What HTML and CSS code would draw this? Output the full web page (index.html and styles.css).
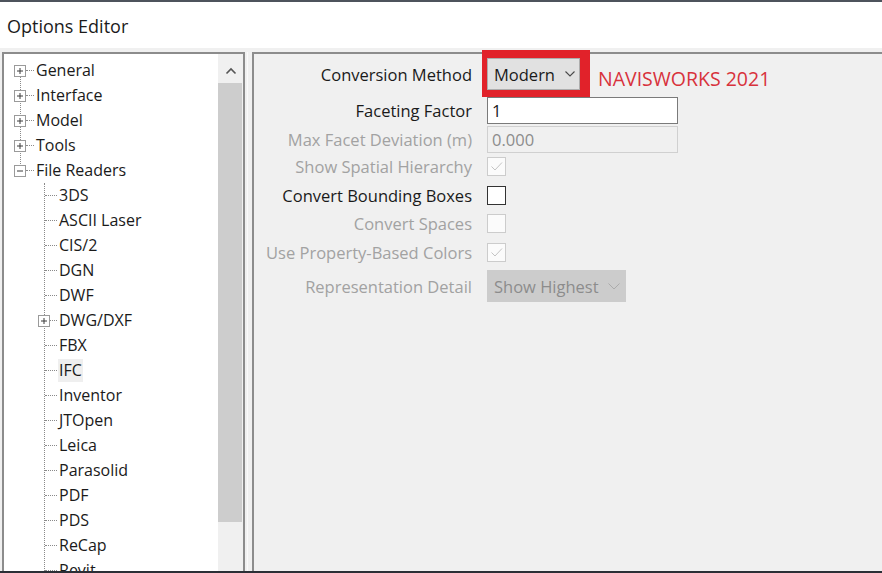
FILE: index.html
```html
<!DOCTYPE html>
<html>
<head>
<meta charset="utf-8">
<title>Options Editor</title>
<link rel="stylesheet" href="styles.css">
</head>
<body>
<div class="window">
  <div class="topline"></div>
  <div class="titlebar"><span class="title">Options Editor</span></div>
  <div class="content">
    <div class="tree-panel">
      <div class="tree">
        <ul class="top">
          <li class="node"><svg class="tog" viewBox="0 0 12 12"><rect x="0.5" y="0.5" width="11" height="11" fill="#fff" stroke="#9a9a9a"/><path d="M3 6h6M6 3v6" stroke="#3a3a3a" stroke-width="1"/></svg><span class="stub"></span><span class="lbl">General</span></li>
          <li class="node"><svg class="tog" viewBox="0 0 12 12"><rect x="0.5" y="0.5" width="11" height="11" fill="#fff" stroke="#9a9a9a"/><path d="M3 6h6M6 3v6" stroke="#3a3a3a" stroke-width="1"/></svg><span class="stub"></span><span class="lbl">Interface</span></li>
          <li class="node"><svg class="tog" viewBox="0 0 12 12"><rect x="0.5" y="0.5" width="11" height="11" fill="#fff" stroke="#9a9a9a"/><path d="M3 6h6M6 3v6" stroke="#3a3a3a" stroke-width="1"/></svg><span class="stub"></span><span class="lbl">Model</span></li>
          <li class="node"><svg class="tog" viewBox="0 0 12 12"><rect x="0.5" y="0.5" width="11" height="11" fill="#fff" stroke="#9a9a9a"/><path d="M3 6h6M6 3v6" stroke="#3a3a3a" stroke-width="1"/></svg><span class="stub"></span><span class="lbl">Tools</span></li>
          <li class="node"><svg class="tog" viewBox="0 0 12 12"><rect x="0.5" y="0.5" width="11" height="11" fill="#fff" stroke="#9a9a9a"/><path d="M3 6h6" stroke="#3a3a3a" stroke-width="1"/></svg><span class="stub"></span><span class="lbl">File Readers</span></li>
        </ul>
        <ul class="kids">
          <li class="leaf"><span class="kstub"></span><span class="lbl">3DS</span></li>
          <li class="leaf"><span class="kstub"></span><span class="lbl">ASCII Laser</span></li>
          <li class="leaf"><span class="kstub"></span><span class="lbl">CIS/2</span></li>
          <li class="leaf"><span class="kstub"></span><span class="lbl">DGN</span></li>
          <li class="leaf"><span class="kstub"></span><span class="lbl">DWF</span></li>
          <li class="leaf"><svg class="tog ktog" viewBox="0 0 12 12"><rect x="0.5" y="0.5" width="11" height="11" fill="#fff" stroke="#9a9a9a"/><path d="M3 6h6M6 3v6" stroke="#3a3a3a" stroke-width="1"/></svg><span class="kstub short"></span><span class="lbl">DWG/DXF</span></li>
          <li class="leaf"><span class="kstub"></span><span class="lbl">FBX</span></li>
          <li class="leaf"><span class="kstub"></span><span class="lbl sel">IFC</span></li>
          <li class="leaf"><span class="kstub"></span><span class="lbl">Inventor</span></li>
          <li class="leaf"><span class="kstub"></span><span class="lbl">JTOpen</span></li>
          <li class="leaf"><span class="kstub"></span><span class="lbl">Leica</span></li>
          <li class="leaf"><span class="kstub"></span><span class="lbl">Parasolid</span></li>
          <li class="leaf"><span class="kstub"></span><span class="lbl">PDF</span></li>
          <li class="leaf"><span class="kstub"></span><span class="lbl">PDS</span></li>
          <li class="leaf"><span class="kstub"></span><span class="lbl">ReCap</span></li>
          <li class="leaf"><span class="kstub"></span><span class="lbl">Revit</span></li>
        </ul>
      </div>
      <div class="vscroll">
        <div class="sarrow"><svg width="12" height="8" viewBox="0 0 12 8"><path d="M1.5 6.5L6 2l4.5 4.5" fill="none" stroke="#555" stroke-width="1.6"/></svg></div>
        <div class="thumb"></div>
      </div>
    </div>
    <div class="splitter"><span class="splitline"></span></div>
    <div class="form-panel">
      <div class="form">
        <div class="label">Conversion Method</div>
        <div class="ctrl">
          <div class="combo highlight"><span>Modern</span><svg class="chev" width="10" height="6" viewBox="0 0 10 6"><path d="M0.5 0.5L5 5l4.5-4.5" fill="none" stroke="#4a4a4a" stroke-width="1.1"/></svg></div>
          <span class="note">NAVISWORKS 2021</span>
        </div>

        <div class="label">Faceting Factor</div>
        <div class="ctrl"><div class="field">1</div></div>

        <div class="label off">Max Facet Deviation (m)</div>
        <div class="ctrl"><div class="field disabled">0.000</div></div>

        <div class="label off">Show Spatial Hierarchy</div>
        <div class="ctrl"><span class="check disabled"><svg width="17" height="17" viewBox="0 0 17 17"><path d="M3.5 8.5l3.5 3.5 7-7.5" fill="none" stroke="#c4c4c4" stroke-width="1"/></svg></span></div>

        <div class="label">Convert Bounding Boxes</div>
        <div class="ctrl"><span class="check"></span></div>

        <div class="label off">Convert Spaces</div>
        <div class="ctrl"><span class="check disabled"></span></div>

        <div class="label off">Use Property-Based Colors</div>
        <div class="ctrl"><span class="check disabled"><svg width="17" height="17" viewBox="0 0 17 17"><path d="M3.5 8.5l3.5 3.5 7-7.5" fill="none" stroke="#c4c4c4" stroke-width="1"/></svg></span></div>

        <div class="label off">Representation Detail</div>
        <div class="ctrl"><div class="combo combo-off"><span>Show Highest</span><svg class="chev" width="12" height="7" viewBox="0 0 12 7"><path d="M0.5 0.5L6 6l5.5-5.5" fill="none" stroke="#ababab" stroke-width="1"/></svg></div></div>
      </div>
    </div>
  </div>
  <div class="bottombar"></div>
</div>
</body>
</html>
```

FILE: styles.css
```css
* { box-sizing: border-box; }
html, body { margin: 0; padding: 0; }
body {
  background: #f0f0f0;
  font-family: "Open Sans", "Noto Sans", "Liberation Sans", sans-serif;
  color: #1a1a1a;
  overflow: hidden;
}
.window {
  width: 882px;
  height: 573px;
  display: flex;
  flex-direction: column;
  overflow: hidden;
}
.topline { height: 2px; background: #4d535c; flex: none; }
.titlebar {
  height: 46px;
  flex: none;
  background: #ffffff;
  display: flex;
  align-items: center;
  padding-left: 7px;
}
.title { font-size: 18px; color: #1b1b1b; position: relative; top: 1px; }
.content {
  flex: 1;
  display: flex;
  padding-top: 4px;
  padding-left: 2px;
  min-height: 0;
}
.bottombar { height: 2px; background: #2b2f36; flex: none; }

/* tree panel */
.tree-panel {
  width: 243px;
  flex: none;
  background: #ffffff;
  border: 2px solid #8c8c8c;
  border-bottom: none;
  display: flex;
  overflow: hidden;
}
.tree {
  flex: 1;
  padding-top: 4px;
  padding-left: 10px;
  font-size: 16px;
  color: #1a1a1a;
}
.tree ul { list-style: none; margin: 0; padding: 0; }
.tree .top { position: relative; }
.tree .top::before {
  content: "";
  position: absolute;
  left: 6px;
  top: 12px;
  bottom: 13px;
  border-left: 1px dotted #8a8a8a;
}
.node, .leaf {
  height: 25px;
  display: flex;
  align-items: center;
  white-space: nowrap;
}
.tog { width: 12px; height: 12px; flex: none; position: relative; display: block; }
.stub {
  width: 8px;
  margin-right: 1px;
  border-top: 1px dotted #8a8a8a;
  flex: none;
}
.tree .kids {
  margin-left: 30px;
  border-left: 1px dotted #8a8a8a;
}
.kstub {
  width: 12px;
  margin-right: 1px;
  border-top: 1px dotted #8a8a8a;
  flex: none;
}
.ktog { margin-left: -7px; }
.kstub.short { width: 7px; }
.lbl { line-height: 23px; padding: 0 1px; }
.lbl.sel { background: #efefef; }

.vscroll {
  width: 25px;
  flex: none;
  background: #f0f0f0;
  display: flex;
  flex-direction: column;
}
.sarrow {
  height: 29px;
  display: flex;
  align-items: center;
  justify-content: center;
  padding-top: 4px;
}
.thumb {
  height: 439px;
  margin: 0 1px 0 0;
  background: #cdcdcd;
}

.splitter {
  width: 7px;
  flex: none;
  display: flex;
  padding-left: 2px;
}
.splitline { width: 1px; background: #fafafa; }

/* form panel */
.form-panel {
  flex: 1;
  border-left: 2px solid #8c8c8c;
  border-top: 2px solid #8c8c8c;
  background: #f0f0f0;
}
.form {
  display: grid;
  grid-template-columns: 218px 1fr;
  grid-template-rows: 40px 32px 26px 28px 30px 26px 32px 36px;
  column-gap: 15px;
  align-items: center;
  font-size: 16.5px;
}
.label { text-align: right; white-space: nowrap; color: #1a1a1a; }
.label.off { color: #a2a2a2; }
.ctrl { display: flex; align-items: center; }

.combo {
  height: 32px;
  display: flex;
  align-items: center;
  padding-left: 6px;
  background: #e1e1e1;
  border: 1px solid #adadad;
  color: #1a1a1a;
  white-space: nowrap;
  flex: none;
}
.combo .chev { margin-left: 10px; flex: none; }
.highlight {
  width: 93px;
  box-shadow: 2.5px -0.5px 0 7.5px #e1222a;
}
.combo-off {
  width: 139px;
  background: #cccccc;
  border-color: #cccccc;
  color: #8c8c8c;
}
.combo-off .chev { margin-left: 9px; }
.note {
  margin-left: 18px;
  color: #d8323c;
  font-size: 19.5px;
  position: relative;
  top: 4px;
  white-space: nowrap;
}
.field {
  width: 191px;
  height: 27px;
  border: 1px solid #7a7a7a;
  background: #ffffff;
  padding-left: 4px;
  display: flex;
  align-items: center;
}
.field.disabled {
  border-color: #d0d0d0;
  background: #f0f0f0;
  color: #8c8c8c;
}
.check {
  width: 19px;
  height: 19px;
  border: 1px solid #333333;
  background: #ffffff;
  display: block;
}
.check svg { display: block; }
.check.disabled { border-color: #cccccc; background: #fbfbfb; }
```
